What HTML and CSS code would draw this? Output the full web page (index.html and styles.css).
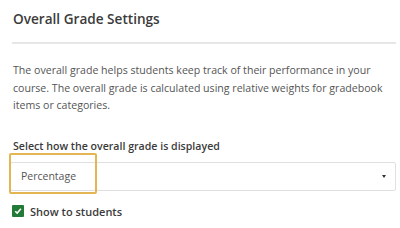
FILE: index.html
```html
<!DOCTYPE html>
<html>
<head>
<meta charset="utf-8">
<link rel="stylesheet" href="styles.css">
</head>
<body>
<div class="panel">
  <h1 class="title">Overall Grade Settings</h1>
  <div class="divider"></div>
  <p class="desc">The overall grade helps students keep track of their performance in your course. The overall grade is calculated using relative weights for gradebook items or categories.</p>
  <div class="field">
    <label class="label">Select how the overall grade is displayed</label>
    <div class="select-wrap">
      <div class="select">
        <span class="value">Percentage</span>
        <span class="caret"></span>
      </div>
      <div class="highlight"></div>
    </div>
  </div>
  <div class="check-row">
    <span class="checkbox">
      <svg width="8" height="8" viewBox="0 0 8 8"><path d="M1.2 4.2 L3.2 6.1 L6.9 1.8" fill="none" stroke="#fff" stroke-width="1.5"/></svg>
    </span>
    <span class="check-label">Show to students</span>
  </div>
</div>
</body>
</html>
```
FILE: styles.css
```css
html, body {
  margin: 0;
  padding: 0;
  background: #fff;
}
body {
  font-family: "Open Sans", "Noto Sans", sans-serif;
  color: #555;
}
.panel {
  padding: 7px 4px 0 12px;
}
.title {
  margin: 0;
  font-size: 13.6px;
  font-weight: 600;
  color: #3b3b3b;
  line-height: 24px;
  padding-left: 1px;
}
.divider {
  height: 2px;
  background: #e6e6e6;
  margin-top: 11px;
}
.desc {
  margin: 18px 0 0 1px;
  font-size: 10.6px;
  line-height: 17.5px;
  color: #555;
}
.field {
  margin-top: 23px;
}
.label {
  display: block;
  font-size: 10.6px;
  font-weight: 600;
  color: #3b3b3b;
  line-height: 16px;
  padding-left: 1px;
}
.select-wrap {
  position: relative;
  margin-top: 8px;
  margin-left: -2px;
}
.select {
  height: 27px;
  border: 1px solid #e0e0e0;
  border-radius: 2px;
  display: flex;
  align-items: center;
  justify-content: space-between;
  padding: 0 9px 0 10px;
}
.value {
  font-size: 10.5px;
  color: #555;
}
.caret {
  width: 0;
  height: 0;
  border-left: 2.5px solid transparent;
  border-right: 2.5px solid transparent;
  border-top: 3px solid #333;
}
.highlight {
  position: absolute;
  left: -1px;
  top: -9px;
  width: 84px;
  height: 37px;
  border: 2.5px solid #e3b553;
  border-radius: 2px;
}
.check-row {
  display: flex;
  align-items: center;
  gap: 6px;
  margin-top: 13px;
}
.checkbox {
  width: 12px;
  height: 12px;
  background: #217a37;
  border-radius: 1px;
  display: flex;
  align-items: center;
  justify-content: center;
}
.check-label {
  font-size: 11px;
  font-weight: 600;
  color: #3b3b3b;
}
```
